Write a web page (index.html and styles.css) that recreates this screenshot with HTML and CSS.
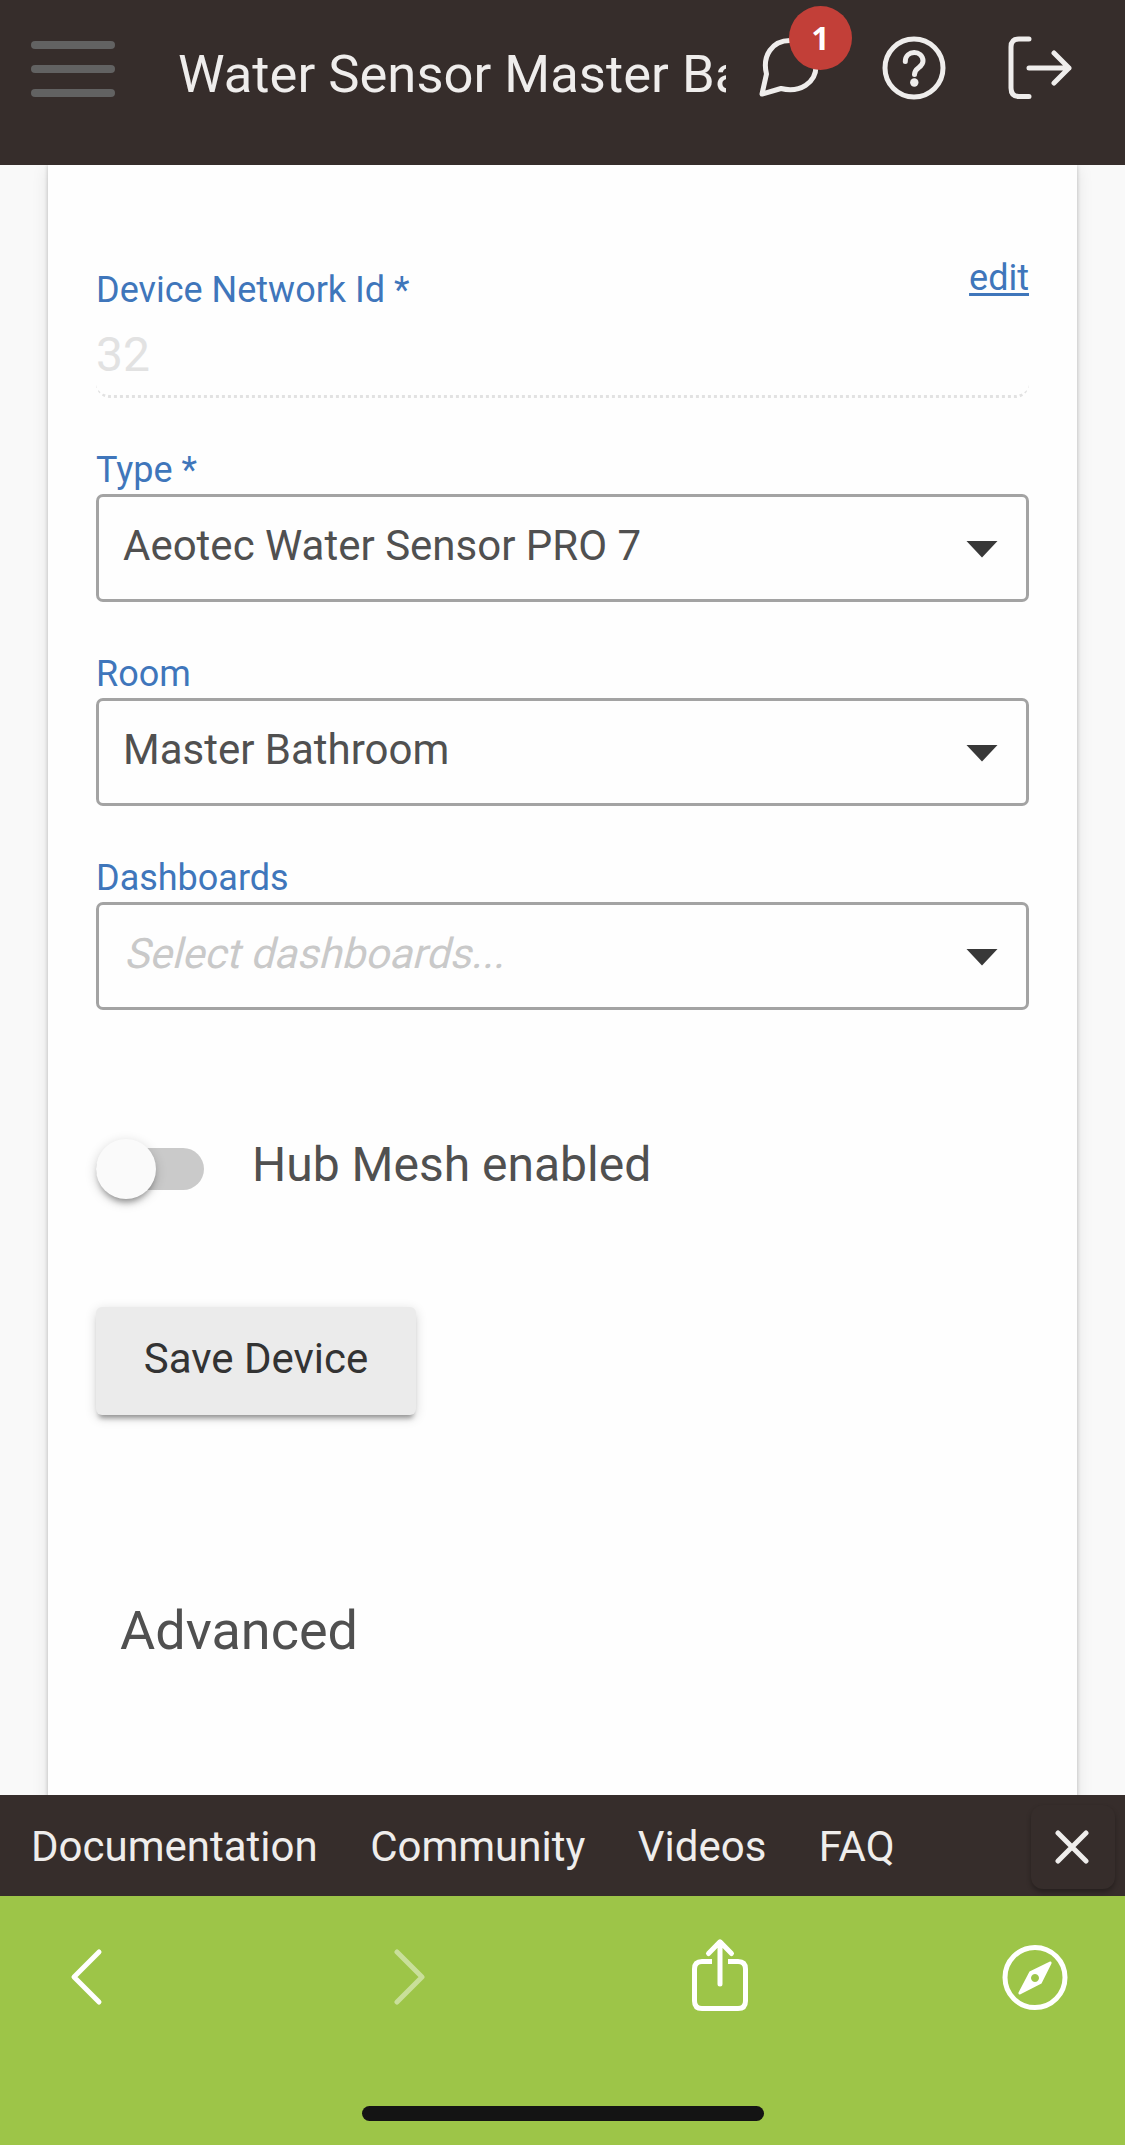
FILE: index.html
```html
<!DOCTYPE html>
<html lang="en">
<head>
  <meta charset="UTF-8" />
  <title>Water Sensor Master Bathroom</title>
  <link rel="stylesheet" href="styles.css">
</head>
<body>
  <header class="topbar">
    <div class="menu">
      <span></span>
      <span></span>
      <span></span>
    </div>
    <h1 class="title">Water Sensor Master Bathroom</h1>
    <div class="icons">
      <a class="messages">
        <svg width="64" height="64" viewBox="0 0 64 64">
          <path d="M4 58 L8.500 38 C4 20 14 4.500 32 4.500 C47 4.500 58 16 58 30 C58 47 42 57 23 52.500 Z" />
        </svg>
        <span class="badge">1</span>
      </a>
      <svg width="64" height="64" viewBox="0 0 64 64">
        <circle cx="32" cy="32" r="29" />
        <path d="M23.3 25.5 C23.3 13.5 41 13.5 41 25 C41 32 32.5 31 32.5 38.5" />
        <circle class="dot" cx="32.3" cy="46.5" r="4.2" />
      </svg>
      <svg width="64" height="64" viewBox="0 0 64 64">
        <path d="M21 3 H11 Q3 3 3 11 V52 Q3 60.500 11 60.500 H21" />
        <path d="M21 32 H61 M46 17 L61 32 L46 47" />
      </svg>
    </div>
  </header>

  <main>
    <form class="card">
      <div class="label-row">
        <label>Device Network Id *</label>
        <a class="edit">edit</a>
      </div>
      <div class="input disabled">32</div>

      <label>Type *</label>
      <div class="select"><span>Aeotec Water Sensor PRO 7</span><i class="arrow"></i></div>

      <label>Room</label>
      <div class="select"><span>Master Bathroom</span><i class="arrow"></i></div>

      <label>Dashboards</label>
      <div class="select"><span class="placeholder">Select dashboards...</span><i class="arrow"></i></div>

      <div class="switch-row">
        <div class="switch"><div class="knob"></div></div>
        <span>Hub Mesh enabled</span>
      </div>

      <div class="btn">Save Device</div>

      <h2>Advanced</h2>
    </form>
  </main>

  <footer class="links">
    <a>Documentation</a>
    <a>Community</a>
    <a>Videos</a>
    <a>FAQ</a>
    <div class="close">
      <svg width="34" height="34" viewBox="0 0 34 34">
        <path d="M3 3 L31 31 M31 3 L3 31" />
      </svg>
    </div>
  </footer>

  <nav class="browser">
    <div class="browser-icons">
      <svg class="back" width="34" height="66" viewBox="0 0 34 66">
        <path d="M29 7 L4 32 L29 57" />
      </svg>
      <svg class="forward" width="34" height="66" viewBox="0 0 34 66">
        <path d="M5 7 L30 32 L5 57" />
      </svg>
      <svg class="share" width="60" height="74" viewBox="0 0 60 74">
        <path class="box" d="M22 24.500 H12 Q4.500 24.500 4.500 32 V64 Q4.500 71.500 12 71.500 H48 Q55.500 71.500 55.500 64 V32 Q55.500 24.500 48 24.500 H38" />
        <path d="M30 47 V6 M18.500 16.500 L30 4.800 L41.500 16.500" />
      </svg>
      <svg class="compass" width="66" height="66" viewBox="0 0 66 66">
        <circle cx="33" cy="32.500" r="30" />
        <path class="needle" fill-rule="evenodd" d="M48 16.500 Q50 16 49.500 18.500 L39.500 38.500 L18 49.500 Q16 50 16.500 47.500 L27.500 26.500 Z M33 29 a4 4 0 1 0 0.010 0 Z" />
      </svg>
    </div>
    <div class="home-bar"></div>
  </nav>
</body>
</html>
```
FILE: styles.css
```css
* {
  box-sizing: border-box;
}

body {
  margin: 0;
  font-family: Roboto, sans-serif;
  background-color: #f9f9f9;
  color: #505050;
}

svg {
  display: block;
  fill: none;
  stroke: #efedec;
  stroke-width: 5;
  stroke-linecap: round;
  stroke-linejoin: round;
}

/* header */
.topbar {
  height: 165px;
  background-color: #362d2b;
  display: flex;
  align-items: flex-start;
}

.menu {
  margin: 41px 63px 0 31px;
  display: flex;
  flex-direction: column;
  gap: 16px;
}

.menu span {
  width: 84px;
  height: 8px;
  border-radius: 5px;
  background-color: #626262;
}

.title {
  width: 548px;
  margin: 43px 32px 0 0;
  font-size: 52.5px;
  font-weight: 400;
  line-height: 62px;
  letter-spacing: 0.03px;
  color: #efedec;
  white-space: nowrap;
  overflow: hidden;
}

.icons {
  display: flex;
  gap: 62px;
  margin-top: 35.5px;
}

.messages {
  position: relative;
  margin-right: -2px;
}

.badge {
  position: absolute;
  left: 31px;
  top: -29.5px;
  width: 63px;
  height: 64px;
  border-radius: 50%;
  background-color: #c23f38;
  color: white;
  font: 700 32px/63px "Open Sans", sans-serif;
  text-align: center;
}

.dot {
  fill: #efedec;
  stroke: none;
}

/* device form */
main {
  height: 1630px;
  padding: 0 48px;
  overflow: hidden;
}

.card {
  height: 1700px;
  padding: 104px 48px 0;
  background-color: #fefefe;
  box-shadow: 0 0 4px rgba(0, 0, 0, 0.22), 0 3px 16px rgba(0, 0, 0, 0.1);
}

label, .edit {
  display: block;
  font-size: 36px;
  line-height: 42px;
  color: #3f76bb;
}

.label-row {
  display: flex;
  justify-content: space-between;
}

.edit {
  margin-top: -12px;
  text-decoration: underline;
  text-decoration-thickness: 3px;
  text-underline-offset: 3px;
}

.input {
  height: 84px;
  margin: 3px 0 51px;
  border-bottom: 3px dotted #e2e2e2;
  border-radius: 14px;
  font-size: 48px;
  line-height: 81px;
}

.input.disabled {
  color: #e2e2e2;
}

.select {
  display: flex;
  align-items: center;
  justify-content: space-between;
  height: 108px;
  margin: 3px 0 51px;
  padding: 0 28px 0 24px;
  border: 3px solid #a3a3a3;
  border-radius: 7px;
  font-size: 42px;
}

.select span {
  padding-bottom: 5px;
}

.select .placeholder {
  color: #c9c9c9;
  transform: skewX(-14deg);
  transform-origin: 0 80%;
}

.arrow {
  width: 32px;
  height: 17px;
  margin-top: 2px;
  background-color: #383838;
  clip-path: polygon(0 0, 100% 0, 50% 100%);
}

.switch-row {
  display: flex;
  gap: 48px;
  margin-top: 129px;
  height: 60px;
  font-size: 48px;
  line-height: 52px;
}

.switch {
  width: 108px;
  height: 42px;
  margin-top: 9px;
  border-radius: 21px;
  background-color: #cacaca;
}

.knob {
  width: 60px;
  height: 60px;
  margin-top: -9px;
  border-radius: 50%;
  background-color: #fafafa;
  box-shadow: 0 6px 6px -3px rgba(0, 0, 0, 0.35), 0 3px 12px rgba(0, 0, 0, 0.18);
}

.btn {
  width: 320px;
  height: 108px;
  margin-top: 108px;
  border-radius: 6px;
  background-color: #ebebeb;
  box-shadow: 0 6px 5px -3px rgba(0, 0, 0, 0.35), 0 3px 12px rgba(0, 0, 0, 0.16);
  color: #333;
  font-size: 42px;
  line-height: 103px;
  text-align: center;
}

h2 {
  margin: 184px 0 0 24px;
  font-size: 54px;
  font-weight: 400;
  line-height: 64px;
}

/* help links */
.links {
  display: flex;
  align-items: center;
  gap: 52.5px;
  height: 101px;
  padding: 2px 10px 0 31px;
  background-color: #362d2b;
  color: #efedec;
  font-size: 42px;
  line-height: 52px;
}

.close {
  display: flex;
  align-items: center;
  justify-content: center;
  width: 84px;
  height: 84px;
  margin: 1px 0 0 auto;
  padding-right: 2px;
  border-radius: 12px;
  box-shadow: 0 3px 5px rgba(0, 0, 0, 0.3);
  background-color: #362d2b;
}

/* browser toolbar */
.browser {
  height: 249px;
  background-color: #9dc548;
}

.browser-icons {
  display: flex;
  align-items: flex-end;
  height: 115px;
  padding-left: 70px;
}

.browser-icons svg {
  stroke: #fff;
}

.browser-icons .forward {
  margin-left: 288px;
  opacity: 0.45;
}

.browser-icons .share {
  margin-left: 264px;
}

.browser-icons .compass {
  margin-left: 252px;
}

.browser-icons .box {
  stroke-linecap: butt;
}

.browser-icons .needle {
  fill: #fff;
  stroke: none;
}

.home-bar {
  width: 402px;
  height: 15px;
  margin: 95px auto 0;
  border-radius: 8px;
  background-color: #141414;
}
```
